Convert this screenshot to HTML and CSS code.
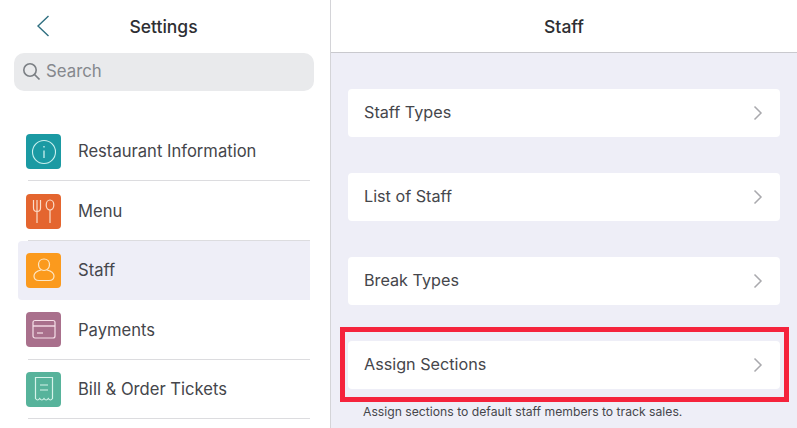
FILE: index.html
```html
<!DOCTYPE html>
<html lang="en">
<head>
<meta charset="utf-8">
<title>Settings - Staff</title>
<link rel="stylesheet" href="styles.css">
</head>
<body>
<div class="app">
  <aside class="side">
    <header class="side-head">
      <svg class="back" width="14" height="22" viewBox="0 0 14 22"><path d="M12.5 1 L2 11 L12.5 21" fill="none" stroke="#2f6f80" stroke-width="1.4"/></svg>
      <h1 class="title">Settings</h1>
    </header>
    <div class="search">
      <svg width="19" height="19" viewBox="0 0 19 19"><circle cx="8" cy="8" r="6.2" fill="none" stroke="#7b7f84" stroke-width="1.6"/><path d="M12.5 12.5 L17.5 17.5" stroke="#7b7f84" stroke-width="1.7"/></svg>
      <span>Search</span>
    </div>
    <ul class="menu">
      <li class="item">
        <span class="ico teal"><svg width="28" height="28" viewBox="0 0 28 28" fill="none" stroke="#c9f0ee" stroke-width="1.1"><circle cx="14" cy="14" r="11.5"/><path d="M14 12.5V20" stroke-width="1.3"/><path d="M14 8v1.6" stroke-width="1.4"/></svg></span>
        <span class="label">Restaurant Information</span>
      </li>
      <li class="item">
        <span class="ico orange"><svg width="28" height="28" viewBox="0 0 28 28" fill="none" stroke="#fbdcc8" stroke-width="1.2"><path d="M3.5 3v8c0 2.500 1.500 3.500 3.500 3.500s3.500-1 3.500-3.500V3M7 3v23"/><ellipse cx="20" cy="8" rx="3.800" ry="5"/><path d="M20 13V26"/></svg></span>
        <span class="label">Menu</span>
      </li>
      <li class="item active">
        <span class="ico amber"><svg width="28" height="28" viewBox="0 0 28 28" fill="none" stroke="#fde6c4" stroke-width="1.2"><path d="M14 3c3.500 0 5.500 2.500 5.500 5.500S17.500 14.500 14 14.500 8.500 11.500 8.500 8.500 10.500 3 14 3z"/><path d="M11 14c-4 1-7 3-7 6 0 3 2 4.500 5 4.500h10c3 0 5-1.500 5-4.500 0-3-3-5-7-6"/></svg></span>
        <span class="label">Staff</span>
      </li>
      <li class="item">
        <span class="ico mauve"><svg width="28" height="28" viewBox="0 0 28 28" fill="none" stroke="#f6dfe8" stroke-width="1.2"><rect x="3" y="4.500" width="22" height="17.500" rx="2"/><path d="M3 10h22" stroke-width="1.400"/><path d="M7 17h6"/></svg></span>
        <span class="label">Payments</span>
      </li>
      <li class="item">
        <span class="ico green"><svg width="28" height="28" viewBox="0 0 28 28" fill="none" stroke="#d6f3ea" stroke-width="1.2"><path d="M5.500 2.500h17v21c-1.400 2-2.800 2-4.200 0-1.400 2-2.900 2-4.300 0-1.400 2-2.900 2-4.300 0-1.400 2-2.800 2-4.200 0z"/><path d="M10 10h8M10 15h8"/></svg></span>
        <span class="label">Bill &amp; Order Tickets</span>
      </li>
    </ul>
  </aside>
  <main class="main">
    <header class="main-head"><h2 class="title">Staff</h2></header>
    <div class="rows">
      <a class="row"><span class="row-text">Staff Types</span><svg class="chev" width="10" height="16" viewBox="0 0 10 16"><path d="M1.500 1.500 L8 8 L1.500 14.500" fill="none" stroke="#a9a9ad" stroke-width="1.500"/></svg></a>
      <a class="row"><span class="row-text">List of Staff</span><svg class="chev" width="10" height="16" viewBox="0 0 10 16"><path d="M1.500 1.500 L8 8 L1.500 14.500" fill="none" stroke="#a9a9ad" stroke-width="1.500"/></svg></a>
      <a class="row"><span class="row-text">Break Types</span><svg class="chev" width="10" height="16" viewBox="0 0 10 16"><path d="M1.500 1.500 L8 8 L1.500 14.500" fill="none" stroke="#a9a9ad" stroke-width="1.500"/></svg></a>
      <a class="row highlighted"><span class="row-text">Assign Sections</span><svg class="chev" width="10" height="16" viewBox="0 0 10 16"><path d="M1.500 1.500 L8 8 L1.500 14.500" fill="none" stroke="#a9a9ad" stroke-width="1.500"/></svg></a>
    </div>
    <p class="hint">Assign sections to default staff members to track sales.</p>
  </main>
</div>
</body>
</html>
```
FILE: styles.css
```css
* { box-sizing: border-box; }
html, body { margin: 0; height: 100%; overflow: hidden; }
body { font-family: Inter, "Liberation Sans", sans-serif; color: #3a3b40; background: #fff; }
.app { display: flex; width: 797px; height: 428px; overflow: hidden; }
.side { width: 331px; flex: none; border-right: 1px solid #d4d4d8; background: #fff; padding: 0 16px 0 14px; }
.side-head { position: relative; height: 53px; display: flex; align-items: center; justify-content: center; padding-right: 1px; }
.back { position: absolute; left: 22px; top: 15px; }
.title { margin: 0; font-size: 17.500px; font-weight: 500; color: #2e2f33; line-height: 53px; }
.search { height: 38px; border-radius: 10px; background: #e9eaec; display: flex; align-items: center; gap: 5px; padding: 0 0 2px 8px; color: #85888d; font-size: 16.800px; }
.menu { list-style: none; margin: 31px 4px 0 0; padding: 0 0 0 4px; }
.item { height: 59.400px; display: flex; align-items: center; gap: 17px; padding-left: 8px; font-size: 16.600px; font-weight: 400; color: #45464b; position: relative; }
.label { padding-bottom: 0.500px; }
.item::after { content: ""; position: absolute; left: 10px; right: 0; bottom: 0; height: 1px; background: #dcdcdf; }
.item.active { background: #eeeef7; border-radius: 4px 0 0 4px; }
.item.active::after { display: none; }
.ico { width: 35px; height: 35px; border-radius: 4px; flex: none; display: flex; align-items: center; justify-content: center; }
.teal { background: #1b9aa3; }
.orange { background: #e4652f; }
.amber { background: #fb9a1d; }
.mauve { background: #a9708c; }
.green { background: #57b39b; }
.main { flex: 1; background: #eeeef7; }
.main-head { height: 53px; background: #fff; border-bottom: 1px solid #c9c9ce; text-align: center; }
.rows { display: flex; flex-direction: column; gap: 36.500px; padding: 36px 17px 0; }
.row { height: 47.500px; background: #fff; border-radius: 4px; display: flex; align-items: center; justify-content: space-between; padding: 0 17px 0 16px; font-size: 16.200px; color: #45464b; position: relative; }
.row-text { padding-bottom: 1.500px; }
.highlighted::after { content: ""; position: absolute; left: -8px; right: -9px; top: -14px; bottom: -13px; border: 5px solid #f5233c; }
.hint { margin: 15px 0 0 32px; font-size: 12.200px; color: #45464b; }
```
